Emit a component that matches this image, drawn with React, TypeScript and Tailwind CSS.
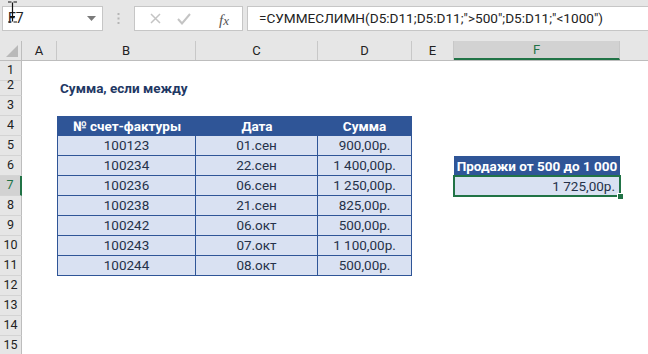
import React from "react";

const COLS = [
  { key: "A", w: 35 },
  { key: "B", w: 139 },
  { key: "C", w: 122 },
  { key: "D", w: 94 },
  { key: "E", w: 42 },
  { key: "F", w: 166 },
  { key: "", w: 60 },
];

const ROW_H: Record<number, number> = { 1: 20, 2: 15 };

const data = [
  ["100123", "01.сен", "900,00р."],
  ["100234", "22.сен", "1 400,00р."],
  ["100236", "06.сен", "1 250,00р."],
  ["100238", "21.сен", "825,00р."],
  ["100242", "06.окт", "500,00р."],
  ["100243", "07.окт", "1 100,00р."],
  ["100244", "08.окт", "500,00р."],
];

const cellFont = { fontFamily: 'Roboto, "Liberation Sans", sans-serif' };
const uiFont = { fontFamily: 'Roboto, "Noto Sans", sans-serif' };

function RowHeader({ n, h }: { n: number; h: number }) {
  const sel = n === 7;
  return (
    <div
      className={
        "w-[22px] shrink-0 flex items-end justify-center border-b border-[#d4d4d4] text-[12.5px] leading-none pb-[4px] " +
        (sel
          ? "bg-[#d2d2d2] text-[#217346] border-r-2 border-r-[#217346]"
          : "bg-[#e6e6e6] text-[#222] border-r border-r-[#bdbdbd]")
      }
      style={{ height: h, ...uiFont }}
    >
      {n}
    </div>
  );
}

function Row({ n, children }: { n: number; children?: React.ReactNode }) {
  const h = ROW_H[n] ?? 20;
  return (
    <div className="flex" style={{ height: h }}>
      <RowHeader n={n} h={h} />
      <div className="flex-1 flex relative">{children}</div>
    </div>
  );
}

function Cell({ w, className = "", children }: { w: number; className?: string; children?: React.ReactNode }) {
  return (
    <div className={"shrink-0 h-full flex items-center " + className} style={{ width: w, ...cellFont }}>
      {children}
    </div>
  );
}

export default function App() {
  return (
    <div className="w-[648px] h-[354px] overflow-hidden bg-white relative">
      {/* formula bar */}
      <div className="h-[41px] bg-[#e6e6e6] flex items-start pt-[6px] relative">
        <div
          className="ml-[2px] w-[101px] h-[25px] bg-white border border-[#c6c6c6] flex items-center justify-between pl-[5px] pr-[6px] text-[14px] text-[#222]"
          style={uiFont}
        >
          <span>F7</span>
          <svg width="9" height="5" viewBox="0 0 9 5">
            <path d="M0 0 H9 L4.5 5 Z" fill="#7a7a7a" />
          </svg>
        </div>
        <div className="w-[31px] h-[25px] flex items-center justify-center">
          <svg width="3" height="11" viewBox="0 0 3 11">
            <rect x="0.5" y="0" width="2" height="2" fill="#b5b5b5" />
            <rect x="0.5" y="4.5" width="2" height="2" fill="#b5b5b5" />
            <rect x="0.5" y="9" width="2" height="2" fill="#b5b5b5" />
          </svg>
        </div>
        <div className="w-[109px] h-[25px] bg-white border border-[#c6c6c6] flex items-center relative">
          <svg className="absolute left-[15px] top-[6px]" width="11" height="11" viewBox="0 0 11 11">
            <path d="M1 1 L10 10 M10 1 L1 10" stroke="#c4c4c4" strokeWidth="1.5" />
          </svg>
          <svg className="absolute left-[42px] top-[6px]" width="14" height="12" viewBox="0 0 14 12">
            <path d="M1 6 L5 10.5 L13 1" stroke="#c4c4c4" strokeWidth="2" fill="none" />
          </svg>
          <span
            className="absolute left-[84px] top-[2px] text-[15px] italic text-[#555]"
            style={{ fontFamily: '"Liberation Serif", serif' }}
          >
            f<span className="text-[13px]">x</span>
          </span>
        </div>
        <div
          className="ml-[4px] flex-1 h-[25px] bg-white border border-r-0 border-[#c6c6c6] flex items-center pl-[11px] text-[13.6px] text-[#222] whitespace-nowrap"
          style={uiFont}
        >
          =СУММЕСЛИМН(D5:D11;D5:D11;"&gt;500";D5:D11;"&lt;1000")
        </div>
        {/* I-beam cursor */}
        <svg className="absolute left-[7px] top-[1px]" width="11" height="22" viewBox="0 0 11 22">
          <path d="M1 1 H4.5 M6.5 1 H10 M5.5 1.5 V20.5 M1 21 H4.5 M6.5 21 H10 M3 15.5 H8" stroke="#111" strokeWidth="1.2" fill="none" />
        </svg>
      </div>

      {/* column headers */}
      <div className="flex h-[20px] bg-[#e6e6e6] border-b border-[#bdbdbd]" style={uiFont}>
        <div className="w-[22px] shrink-0 relative border-r border-[#bdbdbd]">
          <svg className="absolute right-[3px] bottom-[3px]" width="12" height="12" viewBox="0 0 12 12">
            <path d="M12 0 V12 H0 Z" fill="#b9b9b9" />
          </svg>
        </div>
        {COLS.map((c, i) => (
          <div
            key={i}
            className={
              "shrink-0 flex items-center justify-center text-[13px] " +
              (c.key ? "border-r border-[#c8c8c8] " : "") +
              (c.key === "F"
                ? "bg-[#d2d2d2] text-[#217346] border-b-2 border-b-[#217346]"
                : "text-[#222]")
            }
            style={{ width: c.w }}
          >
            {c.key}
          </div>
        ))}
      </div>

      {/* rows */}
      <Row n={1} />
      <Row n={2}>
        <Cell w={35} />
        <Cell w={139} className="pl-[3px] text-[13.5px] font-bold text-[#1f3864] whitespace-nowrap">
          Сумма, если между
        </Cell>
      </Row>
      <Row n={3} />
      <Row n={4}>
        <Cell w={35} />
        <Cell w={139} className="justify-center bg-[#2f5597] text-white font-bold text-[13.5px] border-t border-l border-[#2f5597]">
          № счет-фактуры
        </Cell>
        <Cell w={122} className="justify-center bg-[#2f5597] text-white font-bold text-[13.5px] border-t border-[#2f5597]">
          Дата
        </Cell>
        <Cell w={94} className="justify-center bg-[#2f5597] text-white font-bold text-[13.5px] border-t border-r border-[#2f5597]">
          Сумма
        </Cell>
      </Row>
      {data.map((r, i) => {
        const n = 5 + i;
        return (
          <Row key={n} n={n}>
            <Cell w={35} />
            <Cell w={139} className="justify-center bg-[#d9e1f2] text-[#26324a] text-[13.5px] border-l border-r border-b border-[#2f5597]">
              {r[0]}
            </Cell>
            <Cell w={122} className="justify-center bg-[#d9e1f2] text-[#26324a] text-[13.5px] border-r border-b border-[#2f5597]">
              {r[1]}
            </Cell>
            <Cell w={94} className="justify-center bg-[#d9e1f2] text-[#26324a] text-[13.5px] border-r border-b border-[#2f5597]">
              {r[2]}
            </Cell>
            {n === 6 && (
              <>
                <Cell w={42} />
                <Cell w={166} className="justify-center bg-[#2f5597] text-white font-bold text-[13.5px] whitespace-nowrap">
                  Продажи от 500 до 1 000
                </Cell>
              </>
            )}
            {n === 7 && (
              <>
                <Cell w={42} />
                <Cell w={166} className="justify-end pr-[5px] bg-[#d9e1f2] text-[#26324a] text-[13.5px] relative">
                  <div className="absolute -left-[1px] -top-[1px] -right-[1px] -bottom-[1px] border-2 border-[#217346] pointer-events-none" />
                  <div className="absolute -right-[4px] -bottom-[4px] w-[7px] h-[7px] bg-[#217346] border border-white" />
                  <span className="relative">1 725,00р.</span>
                </Cell>
              </>
            )}
          </Row>
        );
      })}
      {[12, 13, 14, 15].map((n) => (
        <Row key={n} n={n} />
      ))}
    </div>
  );
}
